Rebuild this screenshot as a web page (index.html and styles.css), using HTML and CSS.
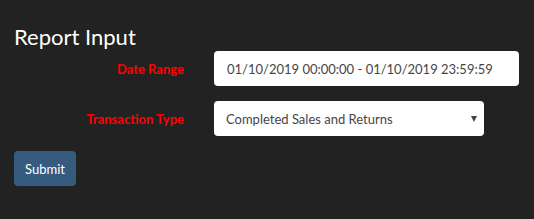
FILE: index.html
```html
<!DOCTYPE html>
<html lang="en">
<head>
    <meta charset="UTF-8">
    <title>Report Input</title>
    <link rel="stylesheet" href="styles.css">
</head>
<body>
    <div class="wrapper">
        <h3 class="title">Report Input</h3>
        <form class="report-form">
            <div class="form-group">
                <label class="form-label" for="dateRange">Date Range</label>
                <input class="form-input" id="dateRange" type="text" value="01/10/2019 00:00:00 - 01/10/2019 23:59:59">
            </div>
            <div class="form-group">
                <label class="form-label" for="transType">Transaction Type</label>
                <div class="select-wrap">
                    <select class="form-select" id="transType">
                        <option>Completed Sales and Returns</option>
                        <option>Completed Sales</option>
                        <option>Returns</option>
                    </select>
                </div>
            </div>
            <button type="button" class="btn-submit">Submit</button>
        </form>
    </div>
</body>
</html>
```

FILE: styles.css
```css
body {
  margin: 0;
  background-color: #222222;
  font-family: "Lato", sans-serif;
  color: #ffffff;
}

.wrapper {
  padding: 0 14px;
}

.title {
  margin: 0;
  padding-top: 24px;
  font-size: 22px;
  font-weight: 400;
  line-height: 26px;
}

.report-form {
  margin-top: 1px;
}

.form-group {
  display: flex;
  align-items: center;
  margin-bottom: 15px;
}

.form-label {
  width: 170px;
  padding-right: 30px;
  text-align: right;
  font-size: 13px;
  font-weight: 700;
  color: #ff0000;
}

.form-input,
.form-select {
  height: 35px;
  box-sizing: border-box;
  border: none;
  border-radius: 4px;
  background-color: #ffffff;
  font-family: "Lato", sans-serif;
  font-size: 13px;
  color: #464545;
  outline: none;
}

.form-input {
  width: 305px;
  padding: 0 13px;
}

.select-wrap {
  position: relative;
}

.form-select {
  width: 270px;
  padding: 0 12px;
  appearance: none;
  -webkit-appearance: none;
}

.select-wrap::after {
  content: "";
  position: absolute;
  right: 7px;
  top: 15px;
  border-left: 3.5px solid transparent;
  border-right: 3.5px solid transparent;
  border-top: 6px solid #444444;
}

.btn-submit {
  height: 35px;
  padding: 0 11px;
  border: none;
  border-radius: 4px;
  background-color: #375a7f;
  font-family: "Lato", sans-serif;
  font-size: 13px;
  color: #ffffff;
}
```
